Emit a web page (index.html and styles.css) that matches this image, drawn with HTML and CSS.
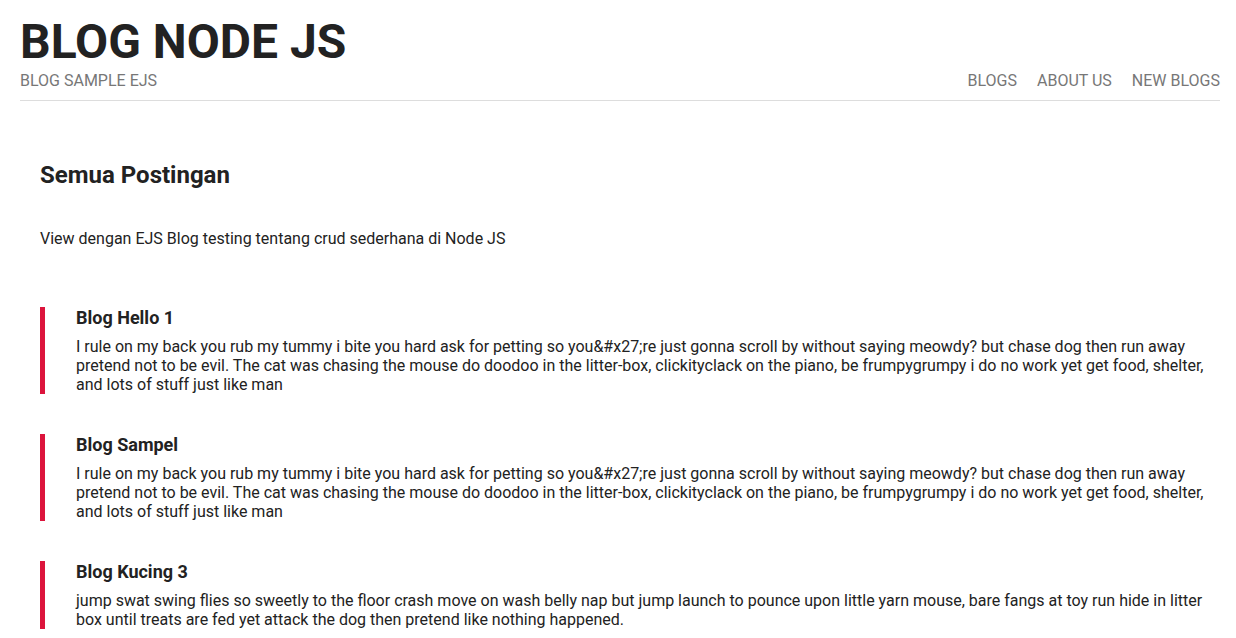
FILE: index.html
```html
<!DOCTYPE html>
<html>
<head>
<meta charset="utf-8">
<link rel="stylesheet" href="styles.css">
</head>
<body>
<header class="site-header">
  <div class="brand">
    <h1 class="brand-title">BLOG NODE JS</h1>
    <div class="brand-sub">BLOG SAMPLE EJS</div>
  </div>
  <nav class="nav">
    <a href="#">BLOGS</a>
    <a href="#">ABOUT US</a>
    <a href="#">NEW BLOGS</a>
  </nav>
</header>
<main class="content">
  <h2 class="page-title">Semua Postingan</h2>
  <p class="intro">View dengan EJS Blog testing tentang crud sederhana di Node JS</p>
  <div class="posts">
    <article class="post">
      <h3 class="post-title">Blog Hello 1</h3>
      <p class="post-body">I rule on my back you rub my tummy i bite you hard ask for petting so you&amp;#x27;re just gonna scroll by without saying meowdy? but chase dog then run away pretend not to be evil. The cat was chasing the mouse do doodoo in the litter-box, clickityclack on the piano, be frumpygrumpy i do no work yet get food, shelter, and lots of stuff just like man</p>
    </article>
    <article class="post">
      <h3 class="post-title">Blog Sampel</h3>
      <p class="post-body">I rule on my back you rub my tummy i bite you hard ask for petting so you&amp;#x27;re just gonna scroll by without saying meowdy? but chase dog then run away pretend not to be evil. The cat was chasing the mouse do doodoo in the litter-box, clickityclack on the piano, be frumpygrumpy i do no work yet get food, shelter, and lots of stuff just like man</p>
    </article>
    <article class="post">
      <h3 class="post-title">Blog Kucing 3</h3>
      <p class="post-body">jump swat swing flies so sweetly to the floor crash move on wash belly nap but jump launch to pounce upon little yarn mouse, bare fangs at toy run hide in litter box until treats are fed yet attack the dog then pretend like nothing happened.</p>
    </article>
  </div>
</main>
</body>
</html>
```

FILE: styles.css
```css
* { box-sizing: border-box; }
body {
  margin: 0;
  padding: 0 16px 0 20px;
  font-family: Roboto, "Liberation Sans", sans-serif;
  color: #222;
  background: #fff;
}
.site-header {
  display: flex;
  justify-content: space-between;
  align-items: flex-end;
  border-bottom: 1px solid #ddd;
  padding: 14px 0 9px;
  width: 1200px;
}
.brand-title {
  margin: 0;
  font-size: 48px;
  font-weight: 700;
  line-height: 56px;
  color: #222;
}
.brand-sub {
  font-size: 16px;
  color: #777;
  line-height: 20px;
  margin-top: 1px;
}
.nav {
  display: flex;
  gap: 20px;
}
.nav a {
  font-size: 16px;
  color: #777;
  text-decoration: none;
  line-height: 20px;
}
.content {
  padding: 60px 0 0 20px;
}
.page-title {
  margin: 0;
  font-size: 24px;
  font-weight: 700;
  line-height: 28px;
}
.intro {
  margin: 40px 0 0;
  font-size: 16px;
  line-height: 20px;
}
.posts {
  margin-top: 58px;
  display: flex;
  flex-direction: column;
  gap: 40px;
}
.post {
  border-left: 5px solid #dc143c;
  padding-left: 31px;
}
.post-title {
  margin: 0 0 8px;
  font-size: 18px;
  font-weight: 700;
  line-height: 22px;
}
.post-body {
  margin: 0;
  font-size: 16px;
  line-height: 19px;
}
```
